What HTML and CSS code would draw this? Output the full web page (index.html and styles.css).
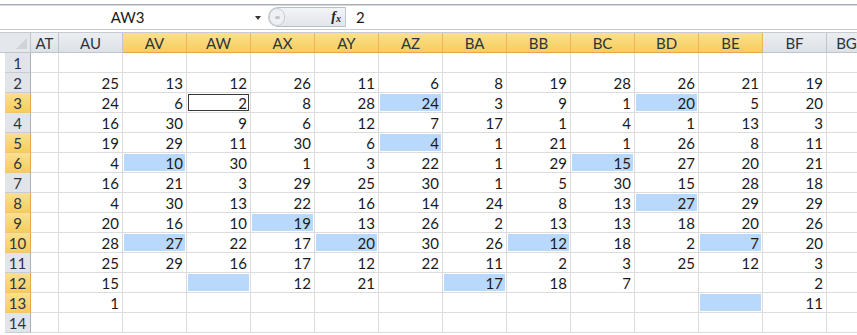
FILE: index.html
```html
<!DOCTYPE html>
<html lang="en">
  <head>
    <meta charset="UTF-8" />
    <title>Sheet</title>
    <link rel="stylesheet" href="styles.css">
  </head>
  <body>
    <div class="formula-bar">
      <div class="name-box">AW3</div>
      <div class="name-arrow"></div>
      <div class="fx-pill">
        <span class="pill-cap"><span class="pill-dot"></span></span>
        <span class="fx">f<sub>x</sub></span>
      </div>
      <div class="formula-input">2</div>
    </div>
    <div class="sheet" id="sheet"></div>

    <script>
      const cols = ['AT', 'AU', 'AV', 'AW', 'AX', 'AY', 'AZ', 'BA', 'BB', 'BC', 'BD', 'BE', 'BF', 'BG'];
      const selCols = ['AV', 'AW', 'AX', 'AY', 'AZ', 'BA', 'BB', 'BC', 'BD', 'BE'];
      const selRows = [3, 5, 6, 8, 9, 10, 12, 13];
      // values for AU..BF, '' = empty
      const data = {
        1: [],
        2: [25, 13, 12, 26, 11, 6, 8, 19, 28, 26, 21, 19],
        3: [24, 6, 2, 8, 28, 24, 3, 9, 1, 20, 5, 20],
        4: [16, 30, 9, 6, 12, 7, 17, 1, 4, 1, 13, 3],
        5: [19, 29, 11, 30, 6, 4, 1, 21, 1, 26, 8, 11],
        6: [4, 10, 30, 1, 3, 22, 1, 29, 15, 27, 20, 21],
        7: [16, 21, 3, 29, 25, 30, 1, 5, 30, 15, 28, 18],
        8: [4, 30, 13, 22, 16, 14, 24, 8, 13, 27, 29, 29],
        9: [20, 16, 10, 19, 13, 26, 2, 13, 13, 18, 20, 26],
        10: [28, 27, 22, 17, 20, 30, 26, 12, 18, 2, 7, 20],
        11: [25, 29, 16, 17, 12, 22, 11, 2, 3, 25, 12, 3],
        12: [15, '', '', 12, 21, '', 17, 18, 7, '', '', 2],
        13: [1, '', '', '', '', '', '', '', '', '', '', 11],
        14: []
      };
      const blue = ['AZ3', 'BD3', 'AZ5', 'AV6', 'BC6', 'BD8', 'AX9', 'AV10', 'AY10', 'BB10', 'BE10', 'AW12', 'BA12', 'BE13'];
      const active = 'AW3';

      const sheet = document.getElementById('sheet');
      let html = '<div class="edge head"></div><div class="corner"><span class="tri"></span></div>';
      cols.forEach((c) => {
        let cls = selCols.includes(c) ? 'col-head sel' : 'col-head';
        html += '<div class="' + cls + '">' + c + '</div>';
      });
      for (let r = 1; r <= 14; r++) {
        html += '<div class="edge"></div>';
        let rcls = selRows.includes(r) ? 'row-head sel' : 'row-head';
        html += '<div class="' + rcls + '">' + r + '</div>';
        cols.forEach((c, i) => {
          let v = i >= 1 && i <= 12 ? data[r][i - 1] : '';
          if (v === undefined) v = '';
          let ref = c + r;
          let cls = 'cell';
          if (blue.includes(ref)) cls += ' hl';
          if (ref === active) cls += ' active';
          html += '<div class="' + cls + '"><span>' + v + '</span></div>';
        });
      }
      sheet.innerHTML = html;
    </script>
  </body>
</html>
```

FILE: styles.css
```css
body {
  margin: 0;
  font-family: Lato, "Open Sans", sans-serif;
  background-color: #fff;
  color: #1a1a1a;
}

.formula-bar {
  display: flex;
  align-items: center;
  height: 24px;
  margin-top: 4px;
  border-top: 1px solid #a9aeb5;
  box-shadow: inset 0 1px 0 #d5d9de;
  border-bottom: 1px solid #c6cbd1;
  margin-bottom: 2px;
}

.name-box {
  width: 255px;
  text-align: center;
  font-size: 15px;
}

.name-arrow {
  width: 0;
  height: 0;
  border-left: 3px solid transparent;
  border-right: 3px solid transparent;
  border-top: 4px solid #333;
  margin: 2px 7px 0 0;
}

.fx-pill {
  display: flex;
  align-items: center;
  justify-content: space-between;
  width: 78px;
  height: 20px;
  background: linear-gradient(#f3f4f6, #e2e5ea);
  border-top-left-radius: 10px;
  border-bottom-left-radius: 10px;
  border: 1px solid #b9bfc7;
  border-right: 1px solid #c3c8cf;
  box-sizing: border-box;
}

.pill-cap {
  display: flex;
  align-items: center;
  justify-content: center;
  width: 16px;
  height: 18px;
  border-radius: 9px;
  border: 1px solid #c9ced5;
  background: #eef0f3;
  margin-left: 0;
  box-sizing: border-box;
}

.pill-dot {
  width: 5px;
  height: 3px;
  border-radius: 2px;
  background: #c2c7ce;
}

.fx {
  font-family: "Liberation Serif", serif;
  font-style: italic;
  font-weight: bold;
  font-size: 14px;
  color: #222;
  margin-right: 4px;
}

.fx sub {
  font-size: 10px;
  vertical-align: -1px;
}

.formula-input {
  padding-left: 10px;
  font-size: 15px;
}

.sheet {
  display: grid;
  grid-template-columns: 5px 26px 28px repeat(12, 64px) 40px;
  grid-auto-rows: 20px;
  font-size: 15px;
  border-top: 1px solid #c6cbd1;
  overflow: hidden;
}

.edge {
  background: #fff;
}

.edge.head {
  background: #e4e7eb;
  border-bottom: 1px solid #bfc5cc;
}

.corner {
  position: relative;
  background: #e4e7eb;
  border-right: 1px solid #bfc5cc;
  border-bottom: 1px solid #bfc5cc;
}

.tri {
  position: absolute;
  right: 3px;
  bottom: 3px;
  width: 0;
  height: 0;
  border-left: 11px solid transparent;
  border-bottom: 11px solid #d0d4d9;
}

.col-head,
.row-head {
  display: flex;
  align-items: center;
  justify-content: center;
  box-sizing: border-box;
  color: #2b3440;
  background: linear-gradient(#eceef1, #dde1e6);
  border-right: 1px solid #bfc5cc;
  border-bottom: 1px solid #bfc5cc;
}

.row-head {
  background: #e1e4e9;
  border-right: 1px solid #a9b0b8;
  border-bottom: 1px solid #c8cdd3;
}

.col-head.sel,
.row-head.sel {
  background: linear-gradient(#fbe08f, #f7cd5c);
  border-right-color: #e8b660;
  border-bottom-color: #e3a64c;
}

.row-head.sel {
  border-bottom-color: #f0c674;
  border-right-color: #e3a64c;
}

.cell {
  box-sizing: border-box;
  border-right: 1px solid #dadcdd;
  border-bottom: 1px solid #dadcdd;
  padding: 1px;
}

.cell span {
  display: block;
  height: 100%;
  box-sizing: border-box;
  text-align: right;
  padding-right: 2px;
  line-height: 18px;
}

.cell.hl span {
  background-color: #b8d8fc;
}

.cell.active span {
  border: 1px solid #3a3a3a;
  line-height: 16px;
  padding-right: 1px;
}
```
